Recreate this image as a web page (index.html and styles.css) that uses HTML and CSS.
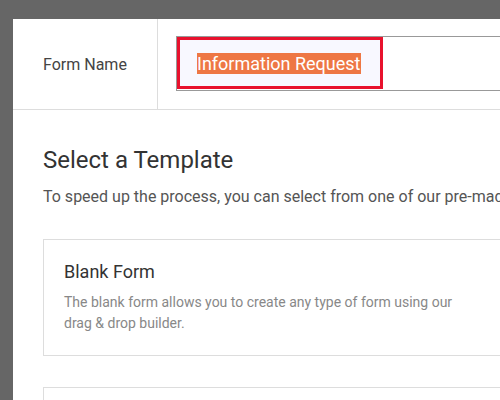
FILE: index.html
```html
<!DOCTYPE html>
<html>
<head>
<meta charset="utf-8">
<link rel="stylesheet" href="styles.css">
</head>
<body>
<div class="panel">
  <div class="name-row">
    <div class="name-label">Form Name</div>
    <div class="name-field">
      <div class="input">
        <span class="focus-box"><span class="selected">Information Request</span></span>
      </div>
    </div>
  </div>
  <div class="content">
    <h1 class="title">Select a Template</h1>
    <p class="intro">To speed up the process, you can select from one of our pre-made templates or start with a blank form.</p>
    <div class="card">
      <h2 class="card-title">Blank Form</h2>
      <p class="card-desc">The blank form allows you to create any type of form using our drag &amp; drop builder.</p>
    </div>
    <div class="card">
      <h2 class="card-title">Simple Contact Form</h2>
      <p class="card-desc">Collect the names, emails, and messages from site visitors.</p>
    </div>
  </div>
</div>
</body>
</html>
```
FILE: styles.css
```css
html, body {
  margin: 0;
  padding: 0;
  background: #666666;
  overflow: hidden;
  height: 100%;
}
body {
  font-family: Roboto, "Liberation Sans", sans-serif;
  padding: 19px 0 0 13px;
  box-sizing: border-box;
}
.panel {
  background: #ffffff;
  width: 600px;
  min-height: 500px;
}
.name-row {
  display: flex;
  height: 90px;
  border-bottom: 1px solid #dddddd;
}
.name-label {
  width: 114px;
  padding-left: 30px;
  border-right: 1px solid #dddddd;
  display: flex;
  align-items: center;
  font-size: 16px;
  color: #444444;
}
.name-field {
  flex: 1;
  padding: 17px 0 0 18px;
}
.input {
  height: 53px;
  border: 1px solid #999999;
  border-right: none;
  display: flex;
}
.focus-box {
  width: 183px;
  height: 46px;
  border: 3px solid #e8112d;
  background: #f8f8ff;
  padding-left: 17px;
  display: flex;
  align-items: center;
}
.selected {
  background: #ee7744;
  color: #ffffff;
  font-size: 18px;
  line-height: 21px;
}
.content {
  padding: 35px 30px 0 30px;
}
.title {
  margin: 0;
  font-weight: 400;
  font-size: 24px;
  line-height: 30px;
  color: #333333;
}
.intro {
  margin: 11px 0 0 0;
  font-size: 16px;
  line-height: 22px;
  color: #555555;
  white-space: nowrap;
}
.card {
  border: 1px solid #dddddd;
  margin-top: 31px;
  padding: 20px 20px 21px 20px;
}
.card-title {
  margin: 0;
  font-weight: 400;
  font-size: 18px;
  line-height: 24px;
  color: #333333;
}
.card-desc {
  margin: 8px 0 0 0;
  max-width: 400px;
  font-size: 14px;
  line-height: 21px;
  color: #888888;
}
```
